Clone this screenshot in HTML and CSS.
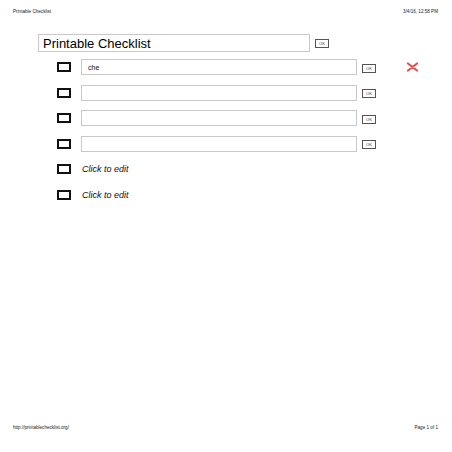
FILE: index.html
```html
<!DOCTYPE html>
<html lang="en">
<head>
    <meta charset="UTF-8">
    <title>Printable Checklist</title>
    <link rel="stylesheet" href="styles.css">
</head>
<body>
    <div class="sheet">
        <!-- print header -->
        <div class="print-bar">
            <span>Printable Checklist</span>
            <span>3/4/16, 12:58 PM</span>
        </div>

        <div class="list">
            <div class="title-row">
                <input class="title-input" type="text" value="Printable Checklist">
                <button class="ok">OK</button>
            </div>

            <div class="item">
                <span class="box"></span>
                <input class="item-input" type="text" value="che">
                <button class="ok">OK</button>
                <span class="del">
                    <svg width="13" height="10" viewBox="0 0 13 10">
                        <path d="M2 1.5 L11 8.5 M11 1.5 L2 8.5" stroke="#e2504f" stroke-width="2.2" stroke-linecap="round"/>
                    </svg>
                </span>
            </div>
            <div class="item">
                <span class="box"></span>
                <input class="item-input" type="text" value="">
                <button class="ok">OK</button>
            </div>
            <div class="item">
                <span class="box"></span>
                <input class="item-input" type="text" value="">
                <button class="ok">OK</button>
            </div>
            <div class="item">
                <span class="box"></span>
                <input class="item-input" type="text" value="">
                <button class="ok">OK</button>
            </div>
            <div class="item">
                <span class="box"></span>
                <span class="edit">Click to edit</span>
            </div>
            <div class="item">
                <span class="box"></span>
                <span class="edit">Click to edit</span>
            </div>
        </div>

        <div class="print-bar foot">
            <span>http://printablechecklist.org/</span>
            <span>Page 1 of 1</span>
        </div>
    </div>
</body>
</html>
```

FILE: styles.css
```css
body {
    margin: 0;
    padding: 0;
    background: #fff;
    font-family: "Liberation Sans", Arial, sans-serif;
    color: #000;
}

.sheet {
    height: 452px;
    display: flex;
    flex-direction: column;
}

.print-bar {
    display: flex;
    justify-content: space-between;
    padding: 9px 14px 0 13px;
    font-size: 4.6px;
    color: #222;
}

.print-bar.foot {
    margin-top: auto;
    padding: 0 14px 22px 13px;
}

.list {
    padding: 20px 0 0 38px;
}

.title-row {
    display: flex;
    align-items: flex-end;
    height: 18px;
}

.title-input {
    box-sizing: border-box;
    width: 272px;
    height: 18px;
    margin: 0;
    padding: 0 4px;
    border: 1px solid #c8c8c8;
    font-family: "Liberation Sans", Arial, sans-serif;
    font-size: 13px;
    color: #000;
    outline: none;
}

.ok {
    box-sizing: border-box;
    width: 14px;
    height: 9px;
    margin: 0 0 4px 5px;
    padding: 0;
    border: 1px solid #555;
    background: #fff;
    font-family: "Liberation Sans", Arial, sans-serif;
    font-size: 4px;
    line-height: 7px;
    color: #333;
}

.item {
    display: flex;
    align-items: center;
    height: 16px;
    margin: 7px 0 0 19px;
}

.item + .item {
    margin-top: 9.5px;
}

.box {
    box-sizing: border-box;
    width: 14px;
    height: 10px;
    border: 2px solid #111;
    margin-right: 10px;
    flex-shrink: 0;
}

.item-input {
    box-sizing: border-box;
    width: 276px;
    height: 16px;
    margin: 0;
    padding: 0 6px;
    border: 1px solid #c8c8c8;
    font-family: "Liberation Sans", Arial, sans-serif;
    font-size: 7px;
    color: #111;
    outline: none;
}

.item .ok {
    margin: 2px 0 0 5px;
}

.del {
    display: flex;
    margin-left: 30px;
}

.edit {
    margin-left: 1px;
    font-size: 9px;
    font-style: italic;
    color: #111;
}
```
